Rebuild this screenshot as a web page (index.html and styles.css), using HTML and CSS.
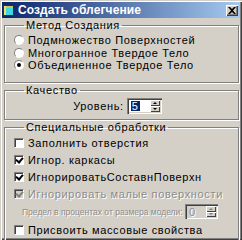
FILE: index.html
```html
<!DOCTYPE html>
<html lang="ru">
<head>
    <meta charset="UTF-8">
    <title>Создать облегчение</title>
    <link rel="stylesheet" href="styles.css">
</head>
<body>
    <div class="window">
        <div class="titlebar">
            <svg class="app-icon" width="11" height="11" viewBox="0 0 11 11">
                <rect x="0.5" y="0.5" width="10" height="10" fill="#c8c850" stroke="#20304a"/>
                <rect x="3" y="3" width="7" height="7" fill="#40d8e0"/>
                <rect x="1" y="1" width="2" height="9" fill="#e8e070"/>
            </svg>
            <span class="title">Создать облегчение</span>
            <button class="close-btn">
                <svg width="8" height="7" viewBox="0 0 8 7">
                    <path d="M0 0h2l2 2 2-2h2L5 3.5 8 7H6L4 5 2 7H0l3-3.5z" fill="#000"/>
                </svg>
            </button>
        </div>
        <div class="content">
            <fieldset class="group group-method">
                <legend>Метод Создания</legend>
                <div class="option"><span class="radio"></span>Подмножество Поверхностей</div>
                <div class="option"><span class="radio"></span>Многогранное Твердое Тело</div>
                <div class="option"><span class="radio checked"></span>Объединенное Твердое Тело</div>
            </fieldset>
            <fieldset class="group group-quality">
                <legend>Качество</legend>
                <div class="level-row">
                    <span class="level-label">Уровень:</span>
                    <div class="spinbox">
                        <div class="spin-field"><span class="selected">5</span></div>
                        <div class="spin-buttons">
                            <span class="spin-btn up"></span>
                            <span class="spin-btn down"></span>
                        </div>
                    </div>
                </div>
            </fieldset>
            <fieldset class="group group-special">
                <legend>Специальные обработки</legend>
                <div class="check-row"><span class="checkbox"></span>Заполнить отверстия</div>
                <div class="check-row"><span class="checkbox checked"></span>Игнор. каркасы</div>
                <div class="check-row"><span class="checkbox checked"></span>ИгнорироватьСоставнПоверхн</div>
                <div class="check-row disabled"><span class="checkbox checked"></span>Игнорировать малые поверхности</div>
                <div class="limit-row disabled">
                    <span class="limit-label">Предел в процентах от размера модели:</span>
                    <div class="spinbox small">
                        <div class="spin-field">0</div>
                        <div class="spin-buttons">
                            <span class="spin-btn up"></span>
                            <span class="spin-btn down"></span>
                        </div>
                    </div>
                </div>
                <div class="check-row"><span class="checkbox"></span>Присвоить массовые свойства</div>
            </fieldset>
        </div>
    </div>
</body>
</html>
```

FILE: styles.css
```css
* {
    margin: 0;
    padding: 0;
    box-sizing: border-box;
}

body {
    background-color: #D4D0C8;
    font-family: 'Liberation Sans', Arial, sans-serif;
    font-size: 11px;
    letter-spacing: 0.65px;
    line-height: 12px;
    color: #000;
}

.window {
    width: 242px;
    height: 240px;
    overflow: hidden;
    background-color: #D4D0C8;
    padding: 2px;
    box-shadow: inset 1px 1px 0 #D4D0C8, inset 2px 2px 0 #fff, inset -1px -1px 0 #404040, inset -2px -2px 0 #808080;
}

.titlebar {
    height: 16px;
    display: flex;
    align-items: center;
    padding: 0 2px 0 1px;
    background: linear-gradient(to right, #0A246A, #A6CAF0);
}

.app-icon {
    flex: none;
    margin-right: 4px;
}

.title {
    flex: 1;
    color: #fff;
    font-weight: bold;
    font-size: 12px;
    letter-spacing: 0.1px;
    white-space: nowrap;
}

.close-btn {
    width: 12px;
    height: 11px;
    display: flex;
    align-items: center;
    justify-content: center;
    background-color: #D4D0C8;
    border: none;
    box-shadow: inset 1px 1px 0 #fff, inset -1px -1px 0 #404040, inset -2px -2px 0 #808080;
}

.content {
    padding: 1px 1px 0 2px;
}

.group {
    min-width: 0;
    border: 1px solid #808080;
    box-shadow: 1px 1px 0 #fff, inset 1px 1px 0 #fff;
    padding: 0 6px 0 9px;
    margin-bottom: 1px;
    white-space: nowrap;
}

.group legend {
    margin-left: 10px;
    padding: 0 2px;
    line-height: 12px;
}

.group-method {
    padding-top: 3px;
    padding-bottom: 11px;
}

.option {
    display: flex;
    align-items: center;
    height: 12.4px;
}

.radio {
    width: 10px;
    height: 10px;
    border-radius: 50%;
    margin-right: 4px;
    background-color: #fff;
    border: 1px solid;
    border-color: #808080 #fff #fff #808080;
    display: flex;
    align-items: center;
    justify-content: center;
}

.radio.checked::after {
    content: '';
    width: 4px;
    height: 4px;
    border-radius: 50%;
    background-color: #000;
}

.group-quality {
    padding-top: 2px;
    padding-bottom: 5px;
}

.level-row {
    display: flex;
    align-items: center;
    justify-content: center;
    gap: 3px;
    padding-right: 11px;
}

.spinbox {
    display: flex;
    width: 35px;
    height: 16px;
    padding: 2px;
    background-color: #fff;
    box-shadow: inset 1px 1px 0 #808080, inset 2px 2px 0 #404040, inset -1px -1px 0 #fff, inset -2px -2px 0 #D4D0C8;
}

.spin-field {
    flex: 1;
    display: flex;
    align-items: stretch;
    padding: 1px 0 1px 2px;
}

.selected {
    background-color: #0A246A;
    color: #fff;
    line-height: 10px;
    padding: 0 1px;
}

.spin-buttons {
    width: 10px;
    display: flex;
    flex-direction: column;
}

.spin-btn {
    flex: 1;
    background-color: #D4D0C8;
    box-shadow: inset 1px 1px 0 #fff, inset -1px -1px 0 #404040;
    display: flex;
    align-items: center;
    justify-content: center;
}

.spin-btn::after {
    content: '';
    border-left: 2px solid transparent;
    border-right: 2px solid transparent;
}

.spin-btn.up::after {
    border-bottom: 2px solid #000;
}

.spin-btn.down::after {
    border-top: 2px solid #000;
}

.group-special {
    padding-top: 1px;
    padding-bottom: 10px;
}

.check-row {
    display: flex;
    align-items: center;
    height: 17px;
}

.checkbox {
    width: 10px;
    height: 10px;
    margin-right: 4px;
    background-color: #fff;
    border: 1px solid;
    border-color: #808080 #fff #fff #808080;
    box-shadow: inset 1px 1px 0 #404040;
    position: relative;
}

.checkbox.checked::after {
    content: '';
    position: absolute;
    left: 2px;
    top: 0px;
    width: 3px;
    height: 5px;
    border: solid #000;
    border-width: 0 2px 2px 0;
    transform: rotate(40deg);
}

.disabled {
    color: #8c8c8c;
    text-shadow: 1px 1px 0 #fff;
}

.disabled .checkbox {
    background-color: #D4D0C8;
}

.disabled .checkbox.checked::after {
    border-color: #808080;
}

.limit-row {
    display: grid;
    grid-template-columns: 159px 33px;
    column-gap: 4px;
    align-items: center;
    height: 19px;
    padding-left: 8px;
}

.limit-label {
    font-size: 8.5px;
    letter-spacing: 0;
}

.spinbox.small {
    width: 33px;
    height: 15px;
    background-color: #D4D0C8;
}

.spinbox.small .spin-field {
    color: #8c8c8c;
    align-items: center;
}

.disabled .spin-btn::after {
    border-bottom-color: #808080;
    border-top-color: #808080;
}
```
